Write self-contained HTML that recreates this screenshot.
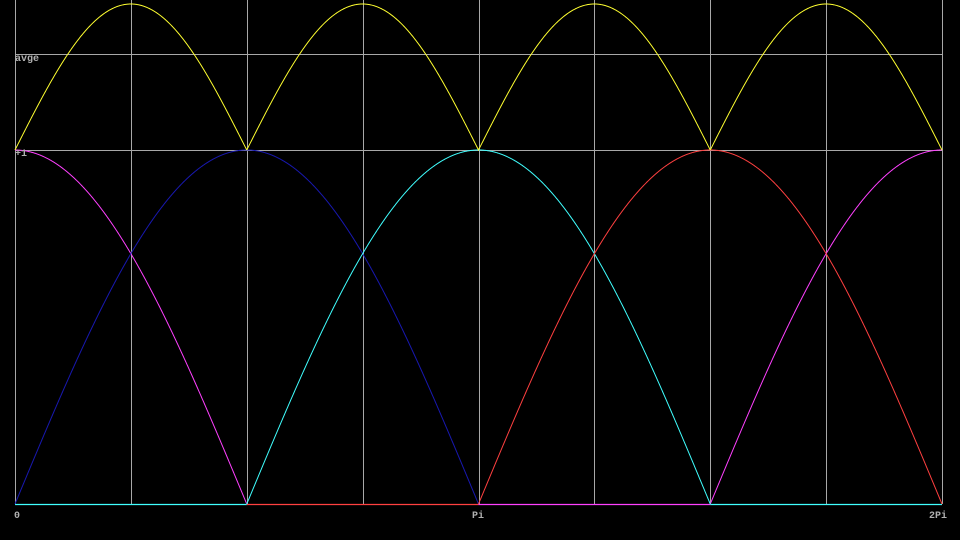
<!DOCTYPE html>
<html><head><style>
html,body{margin:0;padding:0;background:#000;width:960px;height:540px;overflow:hidden}
svg{display:block}
text{font-family:"Liberation Mono",monospace;font-size:10px;fill:#b0b0b0;font-weight:bold}
</style></head><body>
<svg id="s" width="960" height="540" xmlns="http://www.w3.org/2000/svg">
<g id="grid" stroke="#a8a8a8" stroke-width="1"></g>
<g id="curves" fill="none" stroke-width="1"></g>
<text x="15" y="61">avge</text>
<text x="15" y="156">+1</text>
<text x="14" y="518">0</text>
<text x="472" y="518">Pi</text>
<text x="929" y="518">2Pi</text>
</svg>
<script>
var ns="http://www.w3.org/2000/svg";
var g=document.getElementById('grid'),c=document.getElementById('curves');
function ln(p,x1,y1,x2,y2,col){var l=document.createElementNS(ns,'line');l.setAttribute('x1',x1);l.setAttribute('y1',y1);l.setAttribute('x2',x2);l.setAttribute('y2',y2);if(col)l.setAttribute('stroke',col);p.appendChild(l);}
var X0=15,X1=942,W=X1-X0,step=W/8;
for(var k=0;k<=8;k++){var x=Math.round(X0+step*k)+0.5;ln(g,x,0,x,504);}
ln(g,X0,54.5,X1,54.5);ln(g,X0,150.5,X1,150.5);
function poly(col,f,a,b){var pts=[];for(var x=a;x<=b;x+=0.5)pts.push(x+','+f(x).toFixed(2));var p=document.createElementNS(ns,'polyline');p.setAttribute('points',pts.join(' '));p.setAttribute('stroke',col);c.appendChild(p);}
var segc=['#40ffff','#ff4040','#ff40ff','#40ffff'];
for(var i=0;i<4;i++){var l=document.createElementNS(ns,'line');l.setAttribute('x1',X0+i*W/4);l.setAttribute('x2',X0+(i+1)*W/4);l.setAttribute('y1',504.5);l.setAttribute('y2',504.5);l.setAttribute('stroke',segc[i]);l.setAttribute('stroke-width',1.2);c.appendChild(l);}
var H=354,B=504,P=W/2;
function arch(start){return function(x){var t=(x-start)/P;if(t<0||t>1)return B;return B-H*Math.sin(Math.PI*t);};}
poly('#ff40ff',arch(X0-P/2),X0,X0+P/2);
poly('#ff40ff',arch(X0+1.5*P),X0+1.5*P,X1);
poly('#1818b0',arch(X0),X0,X0+P);
poly('#40ffff',arch(X0+P/2),X0+P/2,X0+1.5*P);
poly('#ff4040',arch(X0+P),X0+P,X1);
var q=W/4;
poly('#ffff30',function(x){var t=((x-X0)%q)/q;return 150-146*Math.sin(Math.PI*t);},X0,X1);
</script>
</body></html>
